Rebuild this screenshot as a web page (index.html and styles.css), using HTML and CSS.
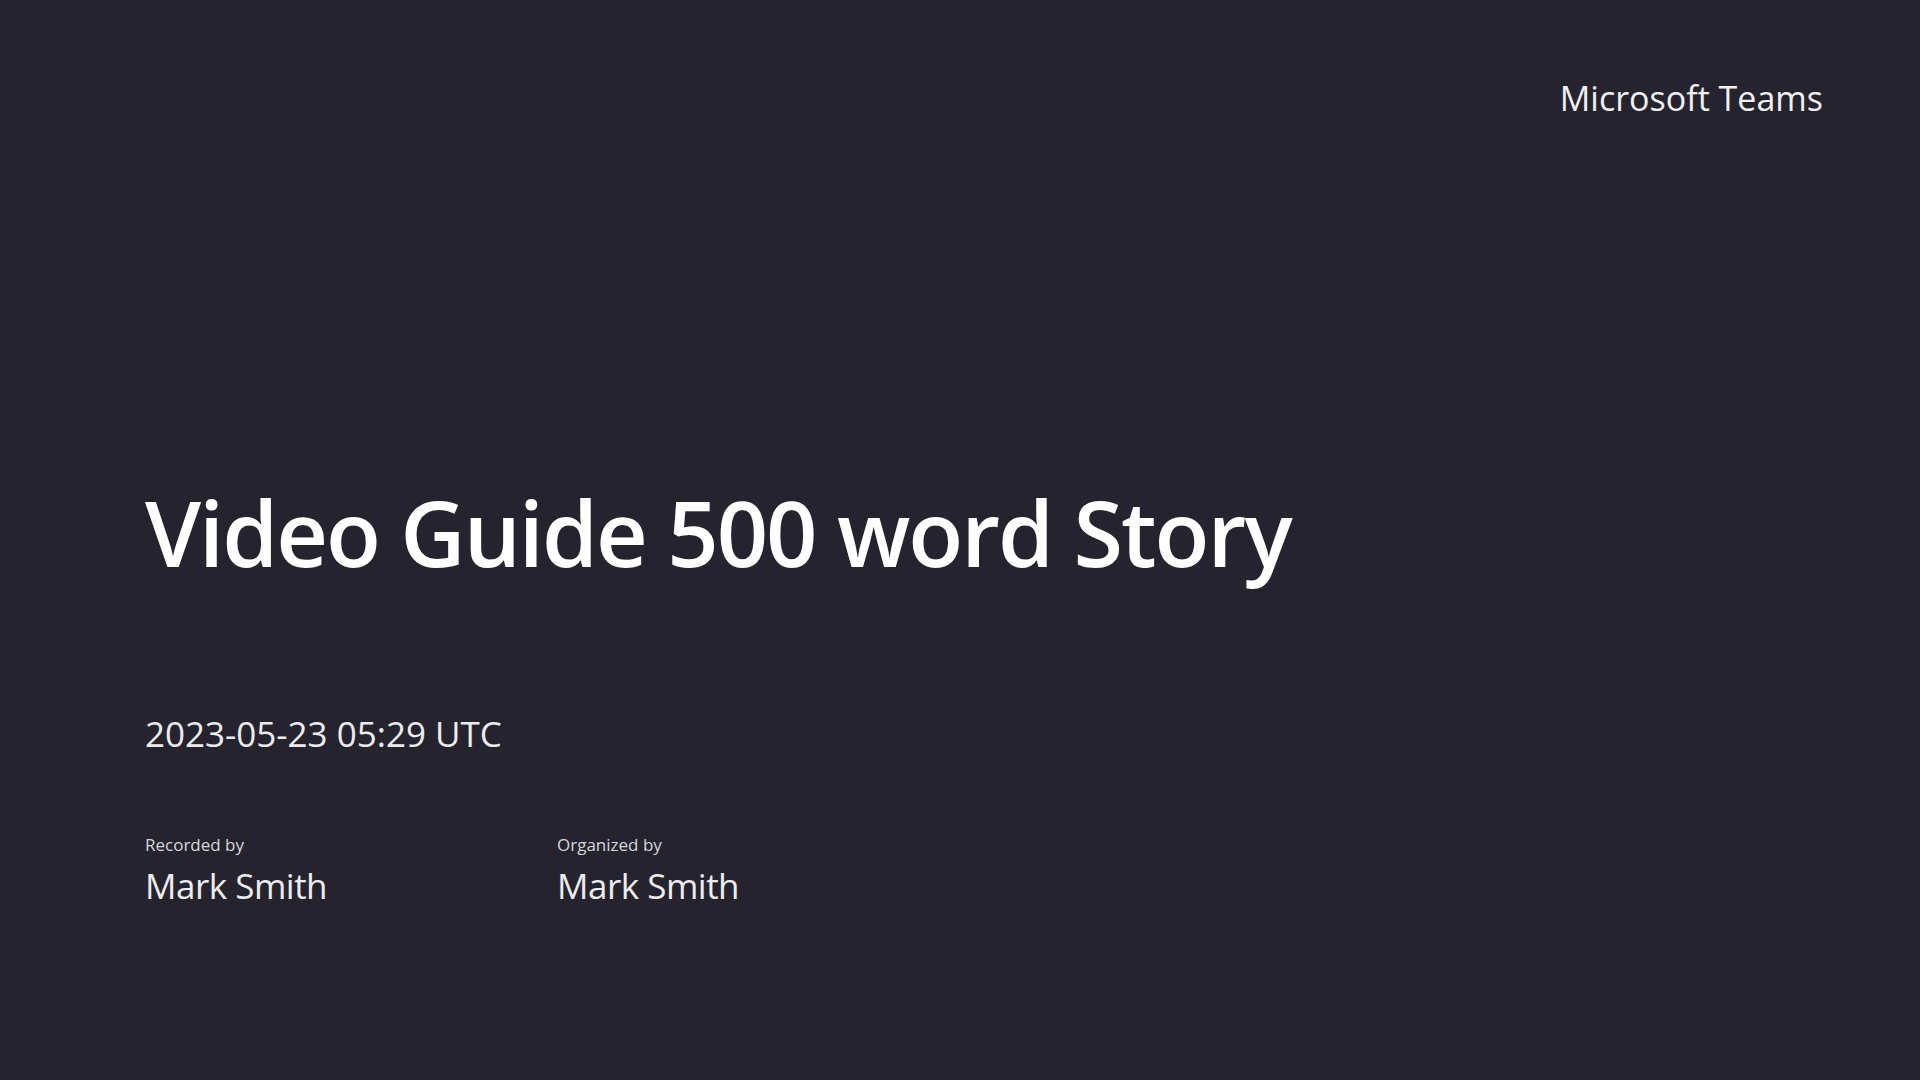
FILE: index.html
```html
<!DOCTYPE html>
<html lang="en">
<head>
  <meta charset="UTF-8">
  <meta name="viewport" content="width=device-width, initial-scale=1.0">
  <title>Video Guide 500 word Story</title>
  <link rel="stylesheet" href="styles.css">
</head>
<body>
  <div class="slide">
    <div class="top-bar">
      <span class="brand">Microsoft Teams</span>
    </div>

    <h1 class="title">Video Guide 500 word Story</h1>

    <p class="date">2023-05-23 05:29 UTC</p>

    <div class="people">
      <div class="person">
        <span class="label">Recorded by</span>
        <span class="name">Mark Smith</span>
      </div>
      <div class="person">
        <span class="label">Organized by</span>
        <span class="name">Mark Smith</span>
      </div>
    </div>
  </div>
</body>
</html>
```

FILE: styles.css
```css
html, body {
  margin: 0;
  padding: 0;
}

body {
  background-color: #25242e;
  color: #f2f2f2;
  font-family: "Open Sans", "Noto Sans", sans-serif;
}

.slide {
  display: flex;
  flex-direction: column;
  height: 1080px;
  box-sizing: border-box;
  padding: 81px 97px 0 145px;
}

.top-bar {
  display: flex;
  justify-content: flex-end;
}

.brand {
  font-size: 34px;
  line-height: 1;
  color: #f0f0f2;
}

.title {
  margin: 372px 0 0 0;
  font-size: 90px;
  line-height: 1;
  font-weight: 600;
  letter-spacing: -2px;
  color: #fff;
}

.date {
  margin: 139px 0 0 0;
  font-size: 35px;
  line-height: 1;
  color: #ececee;
}

.people {
  display: grid;
  grid-template-columns: 412px 412px;
  margin-top: 85px;
}

.person {
  display: flex;
  flex-direction: column;
  gap: 15px;
}

.label {
  font-size: 17px;
  line-height: 1;
  color: #d6d6da;
}

.name {
  font-size: 35px;
  line-height: 1;
  letter-spacing: -0.5px;
  color: #ececee;
}
```
